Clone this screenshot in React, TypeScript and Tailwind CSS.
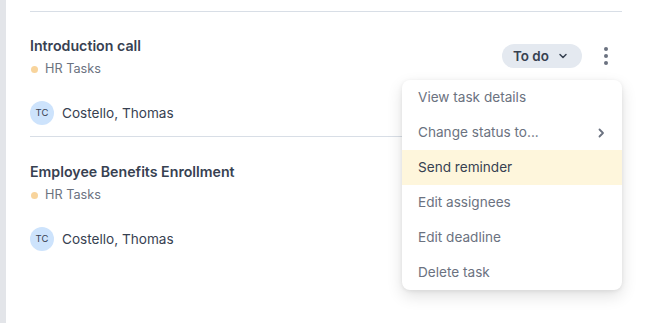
import React from "react";

function Kebab() {
  return (
    <button className="w-6 h-6 flex flex-col items-center justify-center gap-[3px]">
      <span className="w-[4px] h-[4px] rounded-full bg-[#6b7280]" />
      <span className="w-[4px] h-[4px] rounded-full bg-[#6b7280]" />
      <span className="w-[4px] h-[4px] rounded-full bg-[#6b7280]" />
    </button>
  );
}

function Row({ title, menu, top }: { title: string; menu?: boolean; top: string }) {
  return (
    <div className={"relative border-t border-[#d8dee6] flex justify-between pb-[11px] " + top}>
      <div className="flex flex-col">
        <div className="text-[14.2px] leading-[18px] font-semibold text-[#374151]">{title}</div>
        <div className="mt-[6px] flex items-center gap-[7px] h-4">
          <span className="ml-[1px] w-[7px] h-[7px] rounded-full bg-[#f8d49c]" />
          <span className="text-[12.7px] leading-4 text-[#6b7280]">HR Tasks</span>
        </div>
        <div className="mt-6 flex items-center gap-2">
          <div className="w-6 h-6 rounded-full bg-[#cde3fc] flex items-center justify-center text-[9.5px] text-[#374151]">TC</div>
          <span className="text-[13.6px] leading-6 text-[#374151]">Costello, Thomas</span>
        </div>
      </div>
      {menu && (
        <>
          <div className="flex items-start pt-[7px]">
            <div className="flex items-center gap-3 mr-1">
              <div className="w-[80px] h-[24px] rounded-full bg-[#e4e9f0] flex items-center pl-[11px] pr-[14px] justify-between">
                <span className="text-[13.4px] font-semibold text-[#374151]">To do</span>
                <svg width="10" height="10" viewBox="0 0 10 10" fill="none">
                  <path d="M2 3.5 L5 6.5 L8 3.5" stroke="#374151" strokeWidth="1.5" strokeLinecap="round" strokeLinejoin="round" />
                </svg>
              </div>
              <Kebab />
            </div>
          </div>
          <div className="absolute right-0 top-[68px] w-[220px] bg-white rounded-lg shadow-[0_6px_16px_rgba(0,0,0,0.12),0_1px_4px_rgba(0,0,0,0.08)] overflow-hidden z-10">
            {[
              "View task details",
              "Change status to...",
              "Send reminder",
              "Edit assignees",
              "Edit deadline",
              "Delete task",
            ].map((t, i) => (
              <div
                key={t}
                className={
                  i === 2
                    ? "h-[35px] px-4 flex items-center justify-between text-[13.6px] bg-[#fef6dc] text-[#374151]"
                    : "h-[35px] px-4 flex items-center justify-between text-[13.6px] text-[#6b7280]"
                }
              >
                <span>{t}</span>
                {i === 1 && (
                  <svg width="10" height="12" viewBox="0 0 10 12" fill="none">
                    <path d="M3.5 2.5 L7 6 L3.5 9.5" stroke="#6b7280" strokeWidth="1.8" strokeLinecap="round" strokeLinejoin="round" />
                  </svg>
                )}
              </div>
            ))}
          </div>
        </>
      )}
    </div>
  );
}

export default function App() {
  return (
    <div className="w-[645px] h-[323px] bg-white flex overflow-hidden" style={{ fontFamily: "Inter, 'Noto Sans', sans-serif" }}>
      <div className="w-[6px] h-full bg-[#e3e5e9]" />
      <div className="flex-1 pl-6 pr-[23px] pt-[11px]">
        <Row title="Introduction call" menu top="pt-[25px]" />
        <Row title="Employee Benefits Enrollment" top="pt-[26px]" />
      </div>
    </div>
  );
}
